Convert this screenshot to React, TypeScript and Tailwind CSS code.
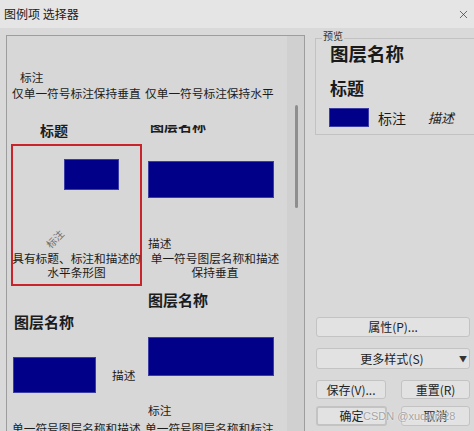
import { X } from 'lucide-react';

function Swatch({ className }: { className: string }) {
  return <div className={`bg-[#000088] border border-[#3c3ca6] shrink-0 ${className}`} />;
}

function Btn({ children, className = '' }: { children: React.ReactNode; className?: string }) {
  return (
    <div
      className={`flex items-center justify-center bg-[#e2e2e2] border border-[#c3c3c3] rounded-[3px] text-[12px] text-[#222] ${className}`}
    >
      {children}
    </div>
  );
}

function LegendList() {
  return (
    <div className="w-[280px] text-[11.7px] leading-[16px] text-[#1c1c1c]">
      {/* row 1 (scrolled, only captions visible) */}
      <div className="flex h-[65px]">
        <div className="w-[136px] pt-[33px]">
          <div className="pl-[13px]">标注</div>
          <div className="pl-[5px] whitespace-nowrap">仅单一符号标注保持垂直</div>
        </div>
        <div className="w-[144px] pt-[49px] pl-[2px] whitespace-nowrap">仅单一符号标注保持水平</div>
      </div>

      {/* row 2 */}
      <div className="flex h-[187px]">
        <div className="w-[136px] pt-[19px]">
          <div className="pl-[33px] text-[14px] leading-[20px] font-bold">标题</div>
          <div className="mt-[4px] ml-[4px] w-[131px] h-[142px] border-2 border-[#c9242c] flex flex-col">
            <Swatch className="ml-[51px] mt-[13px] w-[55px] h-[31px]" />
            <div className="mt-[37px] h-[24px] pl-[32px] flex items-center">
              <span className="-rotate-45 text-[10px] leading-[12px] text-[#6f6f6f]">标注</span>
            </div>
            <div className="flex flex-col items-center leading-[14px]">
              <span className="whitespace-nowrap">具有标题、标注和描述的</span>
              <span className="whitespace-nowrap">水平条形图</span>
            </div>
          </div>
        </div>
        <div className="w-[144px] flex flex-col">
          <div className="mt-[24px] h-[8px] overflow-hidden flex items-end pl-[7px]">
            <span className="text-[14px] leading-[16px] font-bold">图层名称</span>
          </div>
          <Swatch className="ml-[5px] mt-[28px] w-[126px] h-[37px]" />
          <div className="mt-[37px] pl-[5px]">描述</div>
          <div className="flex flex-col items-center leading-[14px]">
            <span className="whitespace-nowrap">单一符号图层名称和描述</span>
            <span className="whitespace-nowrap">保持垂直</span>
          </div>
        </div>
      </div>

      {/* row 3 */}
      <div className="flex">
        <div className="w-[136px] pt-[24px]">
          <div className="pl-[7px] text-[15px] leading-[20px] font-bold">图层名称</div>
          <div className="mt-[25px] ml-[6px] flex items-center gap-[16px]">
            <Swatch className="w-[83px] h-[36px]" />
            <span>描述</span>
          </div>
          <div className="mt-[28px] pl-[5px] leading-[14px] whitespace-nowrap">单一符号图层名称和描述</div>
        </div>
        <div className="w-[144px] pt-[2px]">
          <div className="pl-[5px] text-[15px] leading-[20px] font-bold">图层名称</div>
          <Swatch className="ml-[5px] mt-[27px] w-[126px] h-[39px]" />
          <div className="mt-[26px] pl-[5px]">标注</div>
          <div className="mt-[3px] pl-[2px] leading-[14px] whitespace-nowrap">单一符号图层名称和标注</div>
        </div>
      </div>
    </div>
  );
}

export default function App() {
  return (
    <div className="relative w-[474px] h-[431px] overflow-hidden bg-[#d9d9d9] font-['Noto_Sans_CJK_SC',sans-serif] text-[#1a1a1a] flex flex-col">
      {/* title bar */}
      <div className="h-[28px] shrink-0 bg-[#e5e5e5] flex items-center justify-between pl-[4px] pr-[4px]">
        <span className="text-[12px] leading-[16px]">图例项 选择器</span>
        <X className="w-[13px] h-[13px] text-[#333]" strokeWidth={1.3} />
      </div>

      <div className="flex-1 flex min-h-0">
        {/* legend list */}
        <div className="ml-[6px] mt-[7px] w-[299px] h-[420px] shrink-0 border border-[#9d9d9d] bg-[#d7d7d7] flex overflow-hidden">
          <LegendList />
          <div className="w-[17px] bg-[#d0d0d0] flex justify-center">
            <div className="mt-[69px] ml-[2px] w-[3px] h-[103px] rounded-full bg-[#8e8e8e]" />
          </div>
        </div>

        {/* right column */}
        <div className="ml-[10px] w-[159px] flex flex-col pb-[5px]">
          <div className="relative mt-[10px] w-[170px] h-[97px] border border-[#c2c2c2] bg-[#dadada] pl-[14px] pt-[2px]">
            <span className="absolute -top-[10px] left-[6px] px-[1px] bg-[#d9d9d9] text-[10px] leading-[14px] text-[#333]">
              预览
            </span>
            <div className="text-[18.5px] leading-[24px] font-bold text-[#1a1a1a]">图层名称</div>
            <div className="mt-[11px] text-[17px] leading-[24px] font-bold text-[#1a1a1a]">标题</div>
            <div className="mt-[8px] flex items-center">
              <Swatch className="-ml-[1px] w-[40px] h-[19px]" />
              <span className="ml-[9px] text-[14px] leading-[18px]">标注</span>
              <span className="ml-[22px] text-[13px] leading-[18px] italic">描述</span>
            </div>
          </div>

          <div className="flex-1" />

          <div className="ml-[1px] w-[154px] flex flex-col">
            <Btn className="h-[20px]">属性(P)...</Btn>
            <div className="mt-[11px] h-[21px] flex items-center bg-[#e2e2e2] border border-[#c3c3c3] rounded-[3px] text-[12px] text-[#222]">
              <span className="flex-1 text-center pl-[8px]">更多样式(S)</span>
              <span className="w-[10px] text-[8px] leading-[8px] text-[#333]">▼</span>
            </div>
            <div className="mt-[11px] flex justify-between">
              <Btn className="w-[70px] h-[19px]">保存(V)...</Btn>
              <Btn className="w-[69px] h-[19px]">重置(R)</Btn>
            </div>
            <div className="mt-[7px] flex justify-between">
              <Btn className="w-[71px] h-[20px] border-2 border-[#6f9ed2]">确定</Btn>
              <Btn className="w-[69px] h-[20px]">取消</Btn>
            </div>
          </div>
        </div>
      </div>

      {/* watermark */}
      <span className="absolute left-[363px] top-[409px] text-[11px] leading-[14px] text-[#a4a4a4] font-['Liberation_Sans',sans-serif] [text-shadow:0_0_2px_#fff]">
        CSDN @xuqiqi928
      </span>
    </div>
  );
}
